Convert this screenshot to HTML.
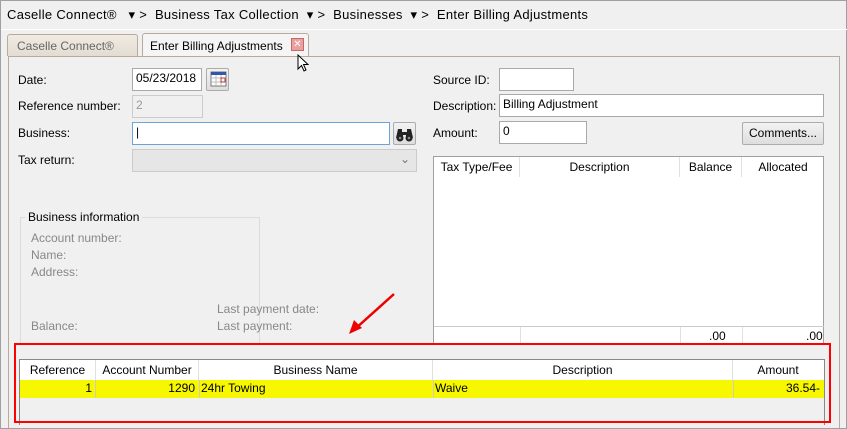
<!DOCTYPE html>
<html><head><style>
*{box-sizing:border-box;margin:0;padding:0}
body{width:847px;height:429px;background:#f0f0f0;font-family:"Liberation Sans",sans-serif;font-size:12px;color:#000;position:relative;overflow:hidden;border:1px solid #a0a0a0}
.a{position:absolute;white-space:nowrap}
.in{position:absolute;background:#fff;border:1px solid #a9a9a9;padding:2px 3px;font-size:12px}
.dis{background:#f0f0f0;border-color:#ccc;color:#999}
.g{color:#888}
.btn{position:absolute;background:linear-gradient(#f2f2f2,#dedede);border:1px solid #acacac;border-radius:2px;text-align:center}
.grid{position:absolute;background:#fff;border:1px solid #a0a0a0}
.hd{position:absolute;text-align:center;border-right:1px solid #e0e0e0;height:20px;line-height:20px;top:0}
</style></head><body>
<div class="a" style="left:6px;top:6px;font-size:13px;letter-spacing:0.3px">Caselle Connect®&nbsp;&nbsp; ▾ &gt;&nbsp; Business Tax Collection&nbsp; ▾ &gt;&nbsp; Businesses&nbsp; ▾ &gt;&nbsp; Enter Billing Adjustments</div>
<div class="a" style="left:0;top:28px;width:847px;height:1px;background:#fff"></div>
<div class="a" style="left:6px;top:33px;width:131px;height:22px;background:linear-gradient(#f1ebe3,#e3dcd2);border:1px solid #b8ab9c;border-bottom:none;border-radius:3px 3px 0 0;color:#666;padding:4px 9px;font-size:12px">Caselle Connect®</div>
<div class="a" style="left:141px;top:32px;width:167px;height:24px;background:#f5f5f5;border:1px solid #b8ab9c;border-bottom:none;border-radius:3px 3px 0 0;padding:5px 7px;font-size:12px">Enter Billing Adjustments</div>
<div class="a" style="left:290px;top:37px;width:13px;height:13px;background:#e8a0a0;border:1px solid #c66;color:#fff;font-size:10px;line-height:11px;text-align:center">✕</div>
<div class="a" style="left:7px;top:55px;width:832px;height:372px;border:1px solid #b8ab9c;border-bottom:none"></div>
<svg class="a" style="left:296px;top:53px" width="14" height="20"><path d="M1 1 L1 15 L4.5 11.5 L7 17 L9 16 L6.5 10.5 L11 10.5 Z" fill="#fff" stroke="#000"/></svg>

<div class="a" style="left:17px;top:72px">Date:</div>
<div class="in" style="left:131px;top:67px;width:70px;height:23px">05/23/2018</div>
<div class="btn" style="left:205px;top:67px;width:23px;height:23px"><svg width="20" height="20"><rect x="3" y="3" width="15" height="14" fill="#fff" stroke="#777"/><rect x="3" y="3" width="15" height="3" fill="#3355aa"/><path d="M3 9h15M3 13h15M8 6v11M13 6v11" stroke="#bbb"/><rect x="13" y="9" width="4" height="4" fill="none" stroke="#b33"/></svg></div>
<div class="a" style="left:17px;top:98px">Reference number:</div>
<div class="in dis" style="left:131px;top:94px;width:71px;height:23px">2</div>
<div class="a" style="left:17px;top:125px">Business:</div>
<div class="in" style="left:131px;top:121px;width:258px;height:23px;border-color:#6aa4d8">|</div>
<div class="btn" style="left:392px;top:121px;width:23px;height:23px"><svg width="21" height="21"><path d="M4 6h4v3h5V6h4l2 9h-7v-3h-3v3H2z" fill="#222"/><circle cx="6" cy="15" r="3.5" fill="#222"/><circle cx="15" cy="15" r="3.5" fill="#222"/><circle cx="6" cy="15" r="1.3" fill="#888"/><circle cx="15" cy="15" r="1.3" fill="#888"/></svg></div>
<div class="a" style="left:17px;top:152px">Tax return:</div>
<div class="in dis" style="left:131px;top:148px;width:285px;height:23px;background:#e6e6e6;text-align:right;padding-right:6px;color:#777">⌄</div>

<div class="a" style="left:19px;top:216px;width:240px;height:130px;border:1px solid #dcdcdc"></div>
<div class="a" style="left:24px;top:209px;background:#f0f0f0;padding:0 3px">Business information</div>
<div class="a g" style="left:30px;top:230px">Account number:</div>
<div class="a g" style="left:30px;top:247px">Name:</div>
<div class="a g" style="left:30px;top:264px">Address:</div>
<div class="a g" style="left:216px;top:301px">Last payment date:</div>
<div class="a g" style="left:30px;top:318px">Balance:</div>
<div class="a g" style="left:216px;top:318px">Last payment:</div>

<div class="a" style="left:432px;top:72px">Source ID:</div>
<div class="in" style="left:498px;top:67px;width:75px;height:23px"></div>
<div class="a" style="left:432px;top:98px">Description:</div>
<div class="in" style="left:498px;top:93px;width:325px;height:23px">Billing Adjustment</div>
<div class="a" style="left:432px;top:125px">Amount:</div>
<div class="in" style="left:498px;top:120px;width:88px;height:23px">0</div>
<div class="btn" style="left:741px;top:121px;width:82px;height:23px;line-height:21px">Comments...</div>

<div class="grid" style="left:432px;top:155px;width:391px;height:190px">
<div class="hd" style="left:0;width:86px">Tax Type/Fee</div>
<div class="hd" style="left:86px;width:160px">Description</div>
<div class="hd" style="left:246px;width:62px">Balance</div>
<div class="hd" style="left:308px;width:82px;border:none">Allocated</div>
<div class="a" style="left:0;top:169px;width:390px;height:1px;background:#ccc"></div>
<div class="a" style="left:86px;top:170px;width:1px;height:20px;background:#e0e0e0"></div>
<div class="a" style="left:246px;top:170px;width:1px;height:20px;background:#e0e0e0"></div>
<div class="a" style="left:308px;top:170px;width:1px;height:20px;background:#e0e0e0"></div>
<div class="a" style="left:275px;top:172px">.00</div>
<div class="a" style="left:372px;top:172px">.00</div>
</div>

<div class="a" style="left:13px;top:342px;width:817px;height:80px;background:#f0f0f0"></div>
<div class="grid" style="left:18px;top:358px;width:806px;height:66px;background:#f0f0f0;border-color:#888;border-bottom:none">
<div class="a" style="left:0;top:0;width:804px;height:20px;background:#fff"></div>
<div class="hd" style="left:0;width:76px">Reference</div>
<div class="hd" style="left:76px;width:103px">Account Number</div>
<div class="hd" style="left:179px;width:234px">Business Name</div>
<div class="hd" style="left:413px;width:300px">Description</div>
<div class="hd" style="left:713px;width:90px;border:none">Amount</div>
<div class="a" style="left:0;top:20px;width:804px;height:18px;background:#f7f700;line-height:17px">
<span class="a" style="left:0;width:72px;text-align:right">1</span>
<span class="a" style="left:76px;width:99px;text-align:right">1290</span>
<span class="a" style="left:181px">24hr Towing</span>
<span class="a" style="left:415px">Waive</span>
<span class="a" style="left:713px;width:87px;text-align:right">36.54-</span>
<span class="a" style="left:75px;top:0;width:1px;height:18px;background:#ccc"></span>
<span class="a" style="left:179px;top:0;width:1px;height:18px;background:#ccc"></span>
<span class="a" style="left:413px;top:0;width:1px;height:18px;background:#ccc"></span>
<span class="a" style="left:713px;top:0;width:1px;height:18px;background:#ccc"></span>
</div>
</div>
<div class="a" style="left:13px;top:342px;width:817px;height:80px;border:2px solid #f00"></div>
<svg class="a" style="left:340px;top:288px" width="60" height="50"><path d="M53 5 L14 40" stroke="#e00" stroke-width="2.5"/><path d="M8 45 L13 31 L21 39 Z" fill="#e00"/></svg>
</body></html>
